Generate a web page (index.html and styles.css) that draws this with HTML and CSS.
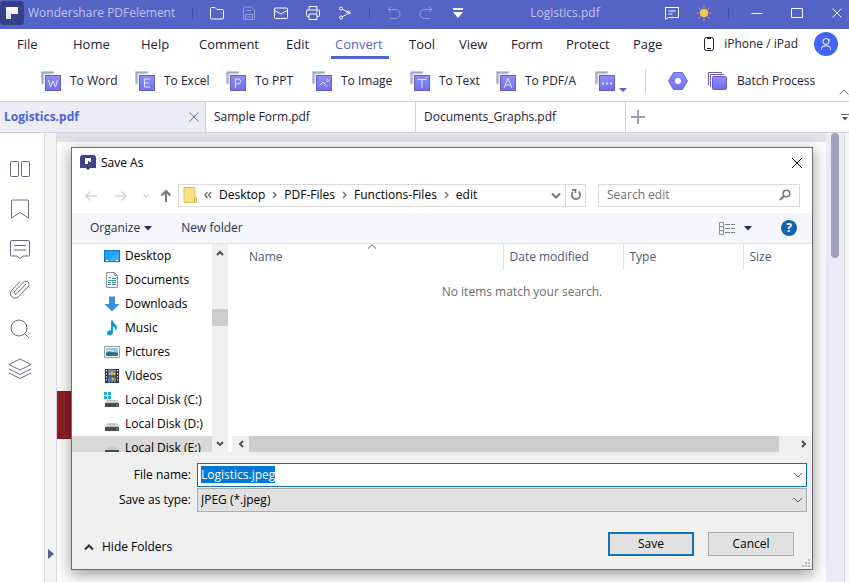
FILE: index.html
```html
<!DOCTYPE html>
<html lang="en">
<head>
    <meta charset="UTF-8">
    <meta name="viewport" content="width=device-width, initial-scale=1.0">
    <title>Logistics.pdf - Wondershare PDFelement</title>
    <link rel="stylesheet" href="styles.css">
</head>
<body>
    <!-- Title bar -->
    <header class="titlebar">
        <svg class="logo" width="24" height="24" viewBox="0 0 24 24"><rect width="24" height="24" rx="4" fill="#363f8a"/><path d="M6 6h12v7h-6v-3H6z" fill="#fff"/><path d="M6 10h6v3h-1v5H6z" fill="#e4e6f5"/></svg>
        <span class="app-name">Wondershare PDFelement</span>
        <span class="divider"></span>
        <div class="quick-tools">
            <button class="tool" aria-label="Open"><svg width="16" height="16" viewBox="0 0 16 16"><path d="M1.500 13V3.500a1 1 0 0 1 1-1h3.500l2 2h5.500a1 1 0 0 1 1 1V13a1 1 0 0 1-1 1h-11a1 1 0 0 1-1-1z"/></svg></button>
            <button class="tool dim" aria-label="Save"><svg width="16" height="16" viewBox="0 0 16 16"><path d="M2.500 3a1 1 0 0 1 1-1h7l3 3v8.500a1 1 0 0 1-1 1h-9a1 1 0 0 1-1-1zM5 5.500h5M4.500 14V9.500h7V14M6 12h4"/></svg></button>
            <button class="tool" aria-label="Mail"><svg width="16" height="16" viewBox="0 0 16 16"><rect x="1.500" y="3" width="13" height="10.500" rx="1"/><path d="M2 5.500l6 3.500 6-3.500"/></svg></button>
            <button class="tool" aria-label="Print"><svg width="16" height="16" viewBox="0 0 16 16"><path d="M4 5V1.500h8V5M4 11.500H2.500a1 1 0 0 1-1-1V6a1 1 0 0 1 1-1h11a1 1 0 0 1 1 1v4.500a1 1 0 0 1-1 1H12M4 9h8v5.500H4zM11 7h1.500"/></svg></button>
            <button class="tool" aria-label="Share"><svg width="16" height="16" viewBox="0 0 16 16"><circle cx="4" cy="3.500" r="1.500"/><circle cx="4" cy="12.500" r="1.500"/><path d="M5.500 4.300L13.500 8.500M5.500 11.700L9.500 9.500"/><circle cx="11.500" cy="7.500" r="1.500"/></svg></button>
        </div>
        <span class="divider"></span>
        <div class="quick-tools">
            <button class="tool dim" aria-label="Undo"><svg width="16" height="16" viewBox="0 0 16 16"><path d="M5 2L2 4.500 5 7M2 4.500h7.500a4.500 4.500 0 0 1 0 9H4"/></svg></button>
            <button class="tool dim" aria-label="Redo"><svg width="16" height="16" viewBox="0 0 16 16"><path d="M11 2l3 2.500L11 7M14 4.500H6.500a4.500 4.500 0 0 0 0 9H12"/></svg></button>
            <button class="tool" aria-label="Customize"><svg width="16" height="16" viewBox="0 0 16 16"><path d="M3 3h10v2H3zM3 7h10l-5 6z" fill="#fff" stroke="none"/></svg></button>
        </div>
        <span class="doc-name">Logistics.pdf</span>
        <div class="quick-tools">
            <button class="tool" aria-label="Feedback"><svg width="16" height="16" viewBox="0 0 16 16"><path d="M1.500 2.500h13v10h-10l-3 2zM4.500 6h7M4.500 9h4"/></svg></button>
            <button class="tool" aria-label="Theme"><svg class="sun" width="16" height="16" viewBox="0 0 16 16"><circle cx="8" cy="8" r="4"/><path d="M8 .5v2M8 13.500v2M.5 8h2M13.500 8h2M2.700 2.700l1.400 1.400M11.900 11.900l1.400 1.400M13.300 2.700l-1.400 1.400M4.100 11.900l-1.400 1.400"/></svg></button>
        </div>
        <span class="divider"></span>
        <div class="window-tools">
            <button class="tool" aria-label="Minimize"><svg width="16" height="16" viewBox="0 0 16 16"><path d="M2.500 8.500h11"/></svg></button>
            <button class="tool" aria-label="Maximize"><svg width="16" height="16" viewBox="0 0 16 16"><path d="M2.500 3.500h11v9h-11z"/></svg></button>
            <button class="tool" aria-label="Close"><svg width="16" height="16" viewBox="0 0 16 16"><path d="M3.500 3.500l9 9M12.500 3.500l-9 9"/></svg></button>
        </div>
    </header>

    <!-- Main menu -->
    <nav class="menubar">
        <div class="menu">
            <button>File</button>
            <button>Home</button>
            <button>Help</button>
            <button>Comment</button>
            <button>Edit</button>
            <button class="active">Convert</button>
            <button>Tool</button>
            <button>View</button>
            <button>Form</button>
            <button>Protect</button>
            <button>Page</button>
        </div>
        <button class="device"><svg width="10" height="14" viewBox="0 0 10 14"><rect x=".5" y=".5" width="9" height="13" rx="2"/><path d="M3 1.500h4M3 11.500h4"/></svg>iPhone / iPad</button>
        <button class="avatar" aria-label="Account"><svg width="24" height="24" viewBox="0 0 24 24"><circle cx="12" cy="9.500" r="3"/><path d="M15 6.500v3M7.500 17.500v-1a2.500 2.500 0 0 1 2.500-2.500h4a2.500 2.500 0 0 1 2.500 2.500v1"/></svg></button>
    </nav>

    <!-- Convert toolbar -->
    <svg class="defs" width="0" height="0">
        <defs>
            <linearGradient id="tile" x1="0" y1="0" x2="0" y2="1"><stop offset="0" stop-color="#8d8ff8"/><stop offset="1" stop-color="#6f70ea"/></linearGradient>
            <symbol id="pages" viewBox="0 0 20 20"><path d="M0 0h13v3H3v10H0z" fill="#9fabc0"/><rect x="4.500" y="4.500" width="15" height="15" fill="url(#tile)" stroke="#6a5cc4"/></symbol>
        </defs>
    </svg>
    <div class="toolbar">
        <div class="converters">
            <button><svg class="glyph" width="20" height="20" viewBox="0 0 20 20"><use href="#pages"/><path d="M7.500 9l2 7L12 10l2.500 6 2-7"/></svg>To Word</button>
            <button><svg class="glyph" width="20" height="20" viewBox="0 0 20 20"><use href="#pages"/><path d="M15 8H9.500v8H15M9.500 12H14"/></svg>To Excel</button>
            <button><svg class="glyph" width="20" height="20" viewBox="0 0 20 20"><use href="#pages"/><path d="M9.500 17V8H12a2.500 2.500 0 0 1 0 5H9.500"/></svg>To PPT</button>
            <button><svg class="glyph" width="20" height="20" viewBox="0 0 20 20"><use href="#pages"/><path d="M7.500 14.500l3.500-3.500 4 4.500"/><circle cx="15.500" cy="9.500" r="1"/></svg>To Image</button>
            <button><svg class="glyph" width="20" height="20" viewBox="0 0 20 20"><use href="#pages"/><path d="M7.500 8.500h9M12 8.500V17"/></svg>To Text</button>
            <button><svg class="glyph" width="20" height="20" viewBox="0 0 20 20"><use href="#pages"/><path d="M8 17l4-9.500L16 17M9.500 14h5"/></svg>To PDF/A</button>
            <button aria-label="More"><svg class="glyph" width="32" height="20" viewBox="0 0 32 20"><use href="#pages" width="20" height="20"/><path d="M7 12.500h2M11 12.500h2M15 12.500h2" stroke-width="2"/><path d="M24 17h8l-4 4z" fill="#6a5cd0" stroke="none"/></svg></button>
        </div>
        <div class="batch">
            <button aria-label="Settings"><svg width="20" height="20" viewBox="0 0 20 20"><path d="M5.500 1.500h9l5 8.500-5 8.500h-9L.5 10z" fill="url(#tile)" stroke="#6a6ce0"/><circle cx="10" cy="10" r="3" fill="#fff"/></svg></button>
            <button><svg width="20" height="20" viewBox="0 0 20 20"><path d="M.5 14V1.500H14M2.500 16V3.500H16" fill="none" stroke="#6a5cc4"/><rect x="4.500" y="5.500" width="14" height="13" rx="1" fill="url(#tile)" stroke="#6a5cc4"/></svg>Batch Process</button>
        </div>
        <button class="collapse" aria-label="Collapse toolbar"><svg width="10" height="6" viewBox="0 0 10 6"><path d="M.5 5.500L5 1l4.500 4.500"/></svg></button>
    </div>

    <!-- Document tabs -->
    <div class="tabs">
        <button class="tab active">Logistics.pdf<svg width="12" height="12" viewBox="0 0 12 12"><path d="M1.500 1.500l9 9M10.500 1.500l-9 9"/></svg></button>
        <button class="tab">Sample Form.pdf</button>
        <button class="tab">Documents_Graphs.pdf</button>
        <button class="new-tab" aria-label="New tab"><svg width="14" height="14" viewBox="0 0 14 14"><path d="M0 7h14M7 0v14"/></svg></button>
        <button class="tab-list" aria-label="All tabs"><svg width="8" height="7" viewBox="0 0 8 7"><path d="M0 .5h8" stroke="#666"/><path d="M1 3h6L4 6.500z" fill="#555"/></svg></button>
    </div>

    <main class="workspace">
        <aside class="sidebar">
            <button aria-label="Thumbnails"><svg width="24" height="24" viewBox="0 0 24 24"><rect x="2.500" y="4.500" width="8" height="15" rx="1"/><rect x="13.500" y="4.500" width="8" height="15" rx="1"/></svg></button>
            <button aria-label="Bookmarks"><svg width="24" height="24" viewBox="0 0 24 24"><path d="M3.500 21V4a1 1 0 0 1 1-1h15a1 1 0 0 1 1 1v17L12 15.500z"/></svg></button>
            <button aria-label="Comments"><svg width="24" height="24" viewBox="0 0 24 24"><path d="M3.500 3.500h17a1 1 0 0 1 1 1V18a1 1 0 0 1-1 1H15l-3 2.500L9 19H3.500a1 1 0 0 1-1-1V4.500a1 1 0 0 1 1-1zM6 8.500h12M6 13h12"/></svg></button>
            <button aria-label="Attachments"><svg width="24" height="24" viewBox="0 0 24 24"><path d="M18 7l-9 9.500c-1.800 1.800-4-.3-2.300-2.200L15 5.500c3.600-3.600 8.200.8 4.800 4.400l-9 9.600C6 24-.5 18 4 13l8-8.500"/></svg></button>
            <button aria-label="Search"><svg width="24" height="24" viewBox="0 0 24 24"><circle cx="11" cy="11" r="8"/><path d="M16.500 16.500l4.500 4.500"/></svg></button>
            <button aria-label="Layers"><svg width="24" height="24" viewBox="0 0 24 24"><path d="M12 2l11 5.500L12 13 1 7.500zM1 12l11 5.500L23 12M1 16l11 5.500L23 16"/></svg></button>
        </aside>
        <div class="gutter"><button aria-label="Expand panel"><svg width="6" height="10" viewBox="0 0 6 10"><path d="M0 0l6 5-6 5z" fill="#565f8c"/></svg></button></div>
        <section class="page"><div class="banner"></div></section>
        <div class="page-scroll"><div class="page-thumb"></div></div>
        <div class="edge"></div>

        <!-- Save dialog -->
        <form class="dialog" role="dialog" aria-label="Save As">
            <div class="dialog-title">
                <svg width="16" height="18" viewBox="0 0 16 18"><path d="M3 1h10a3 3 0 0 1 3 3v10H0V4a3 3 0 0 1 3-3z" fill="#3d4488"/><path d="M5 4h6v4H9V7H8v3H5z" fill="#fff"/><path d="M6 14h4l-2 2z" fill="#333"/></svg>
                <span>Save As</span>
                <button type="button" aria-label="Close"><svg width="12" height="12" viewBox="0 0 12 12"><path d="M1 1l10 10M11 1L1 11"/></svg></button>
            </div>

            <div class="navigation">
                <div class="history">
                    <button type="button" aria-label="Back" class="off"><svg width="14" height="12" viewBox="0 0 14 12"><path d="M13 6H2M6.500 1.500L2 6l4.500 4.500"/></svg></button>
                    <button type="button" aria-label="Forward" class="off"><svg width="14" height="12" viewBox="0 0 14 12"><path d="M1 6h11M7.500 1.500L12 6l-4.500 4.500"/></svg></button>
                    <button type="button" aria-label="Recent" class="off small"><svg width="8" height="6" viewBox="0 0 8 6"><path d="M1.500 1.500L4 4l2.500-2.500"/></svg></button>
                    <button type="button" aria-label="Up" class="small"><svg width="12" height="14" viewBox="0 0 12 14"><path d="M6 13V2M1.500 6.500L6 2l4.500 4.500" stroke-width="2"/></svg></button>
                </div>
                <div class="address">
                    <svg width="14" height="16" viewBox="0 0 14 16"><path d="M1 .5h11v10h1.500v5H1z" fill="#fbe08a" stroke="#e3bd55"/><path d="M11.500 11v4" stroke="#d6a93c"/></svg>
                    <svg width="8" height="8" viewBox="0 0 8 8"><path d="M3.500 1L1 4l2.500 3M7 1L4.500 4 7 7"/></svg>
                    <a href="#">Desktop</a>
                    <svg width="5" height="8" viewBox="0 0 5 8"><path d="M1 1l3 3-3 3"/></svg>
                    <a href="#">PDF-Files</a>
                    <svg width="5" height="8" viewBox="0 0 5 8"><path d="M1 1l3 3-3 3"/></svg>
                    <a href="#">Functions-Files</a>
                    <svg width="5" height="8" viewBox="0 0 5 8"><path d="M1 1l3 3-3 3"/></svg>
                    <a href="#">edit</a>
                    <button type="button" class="previous" aria-label="Previous locations"><svg width="10" height="7" viewBox="0 0 10 7"><path d="M1 1.500l4 4 4-4" stroke-width="2"/></svg></button>
                    <button type="button" class="refresh" aria-label="Refresh"><svg width="12" height="12" viewBox="0 0 12 12"><path d="M3 3a4.200 4.200 0 1 0 5.500-.5M2 .8h3.500V4" stroke-width="1.700"/></svg></button>
                </div>
                <div class="search">
                    <input type="text" placeholder="Search edit" aria-label="Search edit">
                    <svg width="12" height="12" viewBox="0 0 12 12"><circle cx="7.500" cy="4.500" r="3.300"/><path d="M5 7L1 11" stroke-width="2"/></svg>
                </div>
            </div>

            <div class="commands">
                <button type="button">Organize<svg width="8" height="5" viewBox="0 0 8 5"><path d="M0 0h8L4 4.500z" fill="#1e3158"/></svg></button>
                <button type="button">New folder</button>
                <button type="button" class="view" aria-label="Change view">
                    <svg width="17" height="13" viewBox="0 0 17 13"><path d="M.5 .5h4v12h-4zM.5 4.500h4M.5 8.500h4" fill="none" stroke="#8b8f98"/><path d="M6 2.500h5M12 2.500h4M6 6.500h5M12 6.500h4M6 10.500h5M12 10.500h4" stroke="#777c88"/></svg>
                    <svg width="8" height="5" viewBox="0 0 8 5"><path d="M0 0h8L4 4.500z" fill="#1e3158"/></svg>
                </button>
                <button type="button" class="help" aria-label="Help">?</button>
            </div>

            <div class="browser">
                <ul class="tree">
                    <li><a href="#"><svg width="16" height="16" viewBox="0 0 16 16"><rect x=".5" y="2.500" width="15" height="11" fill="#1fa0f5" stroke="#0b78c8"/><path d="M1 13L15 4v9z" fill="#37b1fb"/><path d="M2 12.500h2M12 12.500h2" stroke="#fff"/></svg>Desktop</a></li>
                    <li><a href="#"><svg width="16" height="16" viewBox="0 0 16 16"><path d="M2.500 .5h8l3 3v12h-11z" fill="#fff" stroke="#8a9298"/><path d="M10.500 .5v3h3" fill="none" stroke="#8a9298"/><path d="M4 5.500h3M8 6.500h4M4 8.500h8" stroke="#249fa8"/><path d="M4 10.500h3M4 12.500h3M8 10.500h4M8 12.500h4" stroke="#4b7f9c"/></svg>Documents</a></li>
                    <li><a href="#"><svg width="16" height="16" viewBox="0 0 16 16"><path d="M5 .5h6V8h4.500L8 15.500.5 8H5z" fill="#3a8ddb"/></svg>Downloads</a></li>
                    <li><a href="#"><svg width="16" height="16" viewBox="0 0 16 16"><path d="M7 .5h2c.3 3 4.500 4 4 7.500-.2 1.500-.8 2.500-1.800 3 .7-2.500-.2-3.800-2.200-4.500v6C9 16 3 16.500 3 13.200 3 11 5 10 7 10.500z" fill="#159bd7"/></svg>Music</a></li>
                    <li><a href="#"><svg width="16" height="16" viewBox="0 0 16 16"><path d="M.5 2.500h15v11H.5z" fill="#fff" stroke="#969ca2"/><path d="M2 4h12v8H2z" fill="#86c8f0"/><path d="M2 9c3-2 5-2 12 0v3H2z" fill="#326e8b"/><path d="M2 7c3-2 5 1 8 0" stroke="#fff" fill="none"/></svg>Pictures</a></li>
                    <li><a href="#"><svg width="16" height="16" viewBox="0 0 16 16"><path d="M1 1h14v14H1z" fill="#333"/><path d="M4 1.500h8v6H4z" fill="#6a7eb1"/><path d="M4 8.500h8v6H4z" fill="#4976c9"/><path d="M5 6l3-3 3 2v2H5zM8 9l3 2-3 2z" fill="#d8ac45"/><path d="M2.500 2v12M13.500 2v12" stroke="#eee" stroke-dasharray="1.500 1.500"/></svg>Videos</a></li>
                    <li><a href="#"><svg width="16" height="16" viewBox="0 0 16 16"><path d="M0 0h3v3H0zM4 0h3v3H4zM0 4h3v3H0zM4 4h3v3H4z" fill="#24a9d8"/><path d="M3 8h10l2 3H1z" fill="#c8cccd"/><path d="M1 11h14v4H1z" fill="#484c50"/><path d="M12 13h2" stroke="#55e06a"/></svg>Local Disk (C:)</a></li>
                    <li><a href="#"><svg width="16" height="16" viewBox="0 0 16 16"><path d="M3.500 7h9l2.500 4H1z" fill="#c8cccd"/><path d="M1 11h14v4H1z" fill="#484c50"/><path d="M12 13h2" stroke="#55e06a"/></svg>Local Disk (D:)</a></li>
                    <li class="current"><a href="#"><svg width="16" height="16" viewBox="0 0 16 16"><path d="M3.500 7h9l2.500 4H1z" fill="#c8cccd"/><path d="M1 10h14v5H1z" fill="#484c50"/></svg>Local Disk (E:)</a></li>
                </ul>
                <div class="tree-scroll">
                    <button type="button" aria-label="Scroll up"><svg width="8" height="6" viewBox="0 0 8 6"><path d="M1 5l3-3 3 3"/></svg></button>
                    <div class="tree-thumb"></div>
                    <button type="button" aria-label="Scroll down"><svg width="8" height="6" viewBox="0 0 8 6"><path d="M1 1l3 3 3-3"/></svg></button>
                </div>
                <div class="files">
                    <table>
                        <thead>
                            <tr>
                                <th class="name">Name<svg width="10" height="5" viewBox="0 0 10 5"><path d="M1 4.500L5 .8l4 3.700"/></svg></th>
                                <th class="date">Date modified</th>
                                <th class="type">Type</th>
                                <th>Size</th>
                            </tr>
                        </thead>
                        <tbody>
                            <tr><td colspan="4">No items match your search.</td></tr>
                        </tbody>
                    </table>
                    <div class="files-scroll">
                        <button type="button" aria-label="Scroll left"><svg width="6" height="8" viewBox="0 0 6 8"><path d="M5 1L2 4l3 3"/></svg></button>
                        <div class="track"><div class="files-thumb"></div></div>
                        <button type="button" aria-label="Scroll right"><svg width="6" height="8" viewBox="0 0 6 8"><path d="M1 1l3 3-3 3"/></svg></button>
                    </div>
                </div>
            </div>

            <div class="fields">
                <label for="fileName">File name:</label>
                <div class="combo">
                    <input type="text" id="fileName" value="Logistics.jpeg" spellcheck="false" autocomplete="off">
                    <svg width="10" height="6" viewBox="0 0 10 6"><path d="M1 1l4 4 4-4"/></svg>
                </div>
                <label for="fileType">Save as type:</label>
                <div class="combo">
                    <select id="fileType"><option>JPEG (*.jpeg)</option></select>
                    <svg width="10" height="6" viewBox="0 0 10 6"><path d="M1 1l4 4 4-4"/></svg>
                </div>
            </div>

            <div class="actions">
                <button type="button" class="hide"><svg width="10" height="7" viewBox="0 0 10 7"><path d="M1 5.500l4-4 4 4"/></svg>Hide Folders</button>
                <button type="submit" class="push default">Save</button>
                <button type="button" class="push">Cancel</button>
            </div>
            <svg class="grip" width="8" height="8" viewBox="0 0 8 8"><path d="M6 0h2v2H6zM3 3h2v2H3zM6 3h2v2H6zM0 6h2v2H0zM3 6h2v2H3zM6 6h2v2H6z" fill="#bfbfbf"/></svg>
        </form>
    </main>

    <script>
        // The file name starts out selected, ready to be typed over
        const fileName = document.getElementById('fileName');
        fileName.focus();
        fileName.select();
    </script>
</body>
</html>
```
FILE: styles.css
```css
/* Basic reset and body styling */
* {
    box-sizing: border-box;
    margin: 0;
    padding: 0;
}

body {
    font-family: "Open Sans", "Noto Sans", sans-serif;
    font-size: 12px;
    line-height: 16px;
    color: #1c2033;
    background: #fff;
    display: flex;
    flex-direction: column;
    height: 100vh;
    overflow: hidden;
}

button,
input,
select {
    font: inherit;
    color: inherit;
    background: none;
    border: none;
    outline: none;
}

button {
    display: flex;
    align-items: center;
    justify-content: center;
    white-space: nowrap;
}

a {
    color: inherit;
    text-decoration: none;
}

svg {
    flex: none;
}

.defs {
    position: absolute;
}

/* Title bar */
.titlebar {
    display: flex;
    align-items: center;
    height: 29px;
    padding-bottom: 3px;
    background: #5562c6;
    color: #c0c6f0;
    flex: none;
}

.app-name {
    width: 160px;
    padding-left: 4px;
    white-space: nowrap;
}

.divider {
    width: 17px;
    height: 12px;
    background: linear-gradient(#424ea8, #424ea8) center / 1px 12px no-repeat;
}

.quick-tools,
.window-tools {
    display: flex;
}

.tool {
    width: 32px;
    height: 24px;
}

.window-tools {
    margin-right: -8px;
}

.window-tools .tool {
    width: 40px;
}

.tool svg {
    fill: none;
    stroke: #fff;
}

.tool.dim svg {
    stroke: #929be2;
}

.tool .sun {
    fill: #fcc93c;
    stroke: #dfb765;
}

.doc-name {
    flex: 1;
    text-align: center;
}

/* Menu */
.menubar {
    display: flex;
    align-items: center;
    height: 33px;
    padding: 0 11px 3px 17px;
    flex: none;
}

.menu {
    display: grid;
    grid-template-columns: 56px 68px 58px 87px 49px 74px 50px 52px 55px 67px auto;
    flex: 1;
    height: 30px;
    font-size: 13px;
}

.menu button {
    position: relative;
    justify-content: flex-start;
}

.menu .active {
    color: #5065cc;
}

.menu .active::after {
    content: "";
    position: absolute;
    left: -4px;
    bottom: 0;
    width: 58px;
    height: 3px;
    background: #5065cc;
}

.device {
    gap: 10px;
    margin-right: 16px;
}

.device svg {
    fill: none;
    stroke: #1c2033;
}

.avatar {
    width: 24px;
    height: 24px;
    border-radius: 50%;
    background: #4263f5;
}

.avatar svg {
    fill: none;
    stroke: #fff;
}

/* Convert toolbar */
.toolbar {
    display: flex;
    align-items: center;
    height: 39px;
    padding: 0 0 2px 41px;
    flex: none;
}

.converters {
    display: grid;
    grid-template-columns: 94px 91px 86px 98px 86px 99px 32px;
    padding-right: 18px;
    border-right: 1px solid #cfd2dc;
    height: 24px;
}

.toolbar button {
    justify-content: flex-start;
    gap: 9px;
}

.glyph {
    fill: none;
    stroke: #e4e6ff;
    overflow: visible;
}

.batch {
    display: flex;
    gap: 20px;
    padding-left: 22px;
    flex: 1;
}

.toolbar .collapse {
    align-self: flex-end;
    padding-bottom: 4px;
}

.collapse svg {
    fill: none;
    stroke: #666;
}

/* Document tabs */
.tabs {
    display: flex;
    height: 32px;
    border-top: 1px solid #d0d2da;
    border-bottom: 1px solid #d0d2da;
    flex: none;
}

.tab {
    justify-content: space-between;
    width: 210px;
    padding: 0 8px;
    border-right: 1px solid #d0d2da;
}

.tab.active {
    width: 206px;
    padding: 0 5px 0 4px;
    background: #ebecf4;
    color: #4c63d2;
    font-weight: bold;
}

.tab svg {
    stroke: #5b6fd0;
}

.new-tab {
    padding: 0 5px;
}

.new-tab svg {
    stroke: #9a9eb0;
    stroke-width: 2;
}

.tab-list {
    margin-left: auto;
}

/* Workspace */
.workspace {
    position: relative;
    display: flex;
    flex: 1;
    min-height: 0;
}

.sidebar {
    display: flex;
    flex-direction: column;
    align-items: center;
    gap: 16px;
    width: 45px;
    padding: 24px 5px 0 0;
    border-right: 1px solid #d9dade;
}

.sidebar svg {
    fill: none;
    stroke: #646b80;
}

.gutter {
    display: flex;
    align-items: flex-end;
    width: 12px;
    padding: 0 3px 23px;
    background: #f4f4f5;
    border-right: 1px solid #d9dade;
}

.page {
    flex: 1;
    padding-top: 249px;
    background: #fcfcfc;
    border-top: 9px solid #e1e2e7;
}

.banner {
    width: 50%;
    height: 48px;
    background: #8a1f22;
}

.page-scroll {
    width: 18px;
    padding: 0 5px;
    background: #ebecf4;
}

.page-thumb {
    height: 125px;
    border-radius: 4px;
    background: #a0a3b5;
}

.edge {
    width: 5px;
    background: #f6f6f7;
    border-left: 1px solid #d9dade;
}

/* Save dialog */
.dialog {
    position: absolute;
    top: 14px;
    left: 71px;
    right: 36px;
    background: #f0f0f0;
    border: 1px solid #6b6d70;
    box-shadow: 0 4px 14px rgba(0, 0, 0, 0.4);
    color: #000;
}

.dialog-title {
    display: flex;
    align-items: center;
    gap: 5px;
    height: 30px;
    padding: 0 9px 0 8px;
    background: #fff;
}

.dialog-title button {
    margin-left: auto;
}

.dialog-title button svg {
    stroke: #000;
}

.navigation {
    display: flex;
    align-items: center;
    height: 35px;
    padding: 0 12px 0 4px;
    background: #fff;
}

.history {
    display: flex;
    width: 102px;
}

.history button {
    width: 30px;
    height: 20px;
}

.history .small {
    width: 20px;
}

.history svg,
.address svg,
.search svg {
    fill: none;
    stroke: #777;
    stroke-width: 1.5;
}

.history .off svg {
    stroke: #d4d4d4;
}

.address {
    display: flex;
    align-items: center;
    gap: 7px;
    flex: 1;
    height: 23px;
    padding: 0 0 1px 4px;
    border: 1px solid #d9d9d9;
    white-space: nowrap;
}

.address svg:first-child {
    stroke-width: 1;
}

.previous {
    margin-left: auto;
    width: 12px;
}

.refresh {
    width: 20px;
    height: 21px;
    margin-left: -4px;
    border-left: 1px solid #d9d9d9;
}

.search {
    display: flex;
    align-items: center;
    width: 202px;
    height: 23px;
    margin-left: 12px;
    padding: 0 8px 1px;
    border: 1px solid #d9d9d9;
}

.search input {
    flex: 1;
    min-width: 0;
}

.search input::placeholder {
    color: #6d6d6d;
}

/* Command bar */
.commands {
    display: flex;
    align-items: center;
    height: 31px;
    padding: 0 15px 0 18px;
    background: #f4f6f9;
    border-bottom: 1px solid #e3e5e9;
    color: #1e3158;
}

.commands button {
    gap: 4px;
    margin-right: 29px;
}

.commands .view {
    gap: 8px;
    margin-left: auto;
}

.commands .help {
    width: 16px;
    height: 16px;
    margin-right: 0;
    border-radius: 50%;
    background: #1264b0;
    color: #fff;
    font-weight: bold;
}

/* Folder tree and file list */
.browser {
    display: flex;
    height: 208px;
    background: #fff;
}

.tree {
    width: 140px;
    overflow: hidden;
    list-style: none;
}

.tree a {
    display: flex;
    align-items: center;
    gap: 5px;
    height: 24px;
    padding-left: 32px;
    white-space: nowrap;
}

.current {
    background: #d9d9d9;
}

.tree-scroll {
    display: flex;
    flex-direction: column;
    width: 16px;
    background: #f0f0f0;
}

.tree-scroll button {
    height: 17px;
}

.tree-scroll svg,
.files-scroll svg {
    fill: none;
    stroke: #505050;
    stroke-width: 2;
}

.tree-thumb {
    height: 17px;
    margin: 48px 0 auto;
    background: #cdcdcd;
}

.files {
    display: flex;
    flex-direction: column;
    justify-content: space-between;
    flex: 1;
    padding-left: 4px;
}

table {
    width: 100%;
    table-layout: fixed;
    border-collapse: collapse;
}

th {
    height: 26px;
    padding-left: 6px;
    border-left: 1px solid #e2e3e6;
    color: #4c5a78;
    font-weight: normal;
    text-align: left;
}

.name {
    position: relative;
    width: 271px;
    padding-left: 17px;
    border-left: none;
}

.name svg {
    position: absolute;
    top: 0;
    left: 50%;
    fill: none;
    stroke: #666;
}

.date,
.type {
    width: 120px;
}

td {
    padding: 14px 0 0;
    color: #6d6d6d;
    text-align: center;
}

.files-scroll {
    display: flex;
    height: 16px;
    background: #f0f0f0;
}

.files-scroll button {
    width: 17px;
}

.track {
    flex: 1;
}

.files-thumb {
    width: 97%;
    height: 16px;
    background: #cdcdcd;
}

/* File name and type */
.fields {
    display: grid;
    grid-template-columns: 119px 1fr;
    align-items: center;
    gap: 1px 6px;
    padding: 11px 5px 0 0;
}

.fields label {
    text-align: right;
}

.combo {
    position: relative;
}

.combo input,
.combo select {
    display: block;
    width: 100%;
    height: 24px;
    padding: 0 3px 1px;
    border: 1px solid #adadad;
    background: #e1e1e1;
    appearance: none;
}

.combo input {
    border-color: #0f6fae;
    background: #fff;
}

.combo input::selection {
    background: #0078d7;
    color: #fff;
}

.combo svg {
    position: absolute;
    top: 9px;
    right: 4px;
    fill: none;
    stroke: #555;
    pointer-events: none;
}

/* Dialog buttons */
.actions {
    display: flex;
    align-items: center;
    gap: 14px;
    padding: 20px 18px 13px 12px;
}

.hide {
    gap: 8px;
    margin-right: auto;
    padding-top: 6px;
}

.hide svg {
    fill: none;
    stroke: #333;
    stroke-width: 2;
}

.push {
    width: 86px;
    height: 24px;
    background: #e1e1e1;
    border: 1px solid #adadad;
}

.push.default {
    border: 2px solid #1271b8;
}

.grip {
    position: absolute;
    right: 2px;
    bottom: 2px;
}
```
